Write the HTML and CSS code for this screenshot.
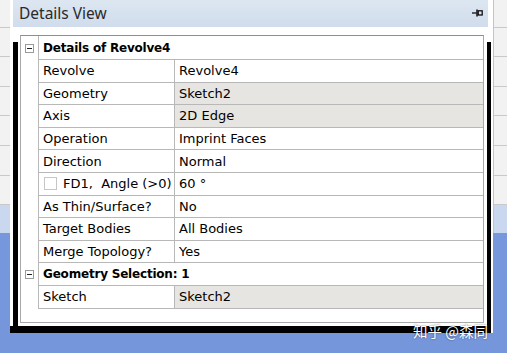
FILE: index.html
```html
<!DOCTYPE html>
<html lang="en">
<head>
    <meta charset="UTF-8" />
    <meta name="viewport" content="width=device-width, initial-scale=1.0" />
    <title>Details View</title>
    <link rel="stylesheet" href="styles.css">
</head>
<body>
    <div class="screen">
        <div class="side side-left"></div>

        <div class="window">
            <div class="title-bar">
                <span class="title">Details View</span>
                <svg class="pin" width="11" height="8" viewBox="0 0 11 8">
                    <path d="M0 4H4.5" stroke="#000" stroke-width="1.2" />
                    <path d="M5 0.5V7.5" stroke="#000" stroke-width="1.4" />
                    <rect x="6.2" y="1.8" width="4" height="4.2" fill="none" stroke="#000" stroke-width="1.2" />
                </svg>
            </div>

            <div class="frame">
                <div class="details-grid">
                    <div class="row group first">
                        <div class="toggle"><span class="minus"></span></div>
                        <div class="cell group-title">Details of Revolve4</div>
                    </div>
                    <div class="row">
                        <div class="toggle"></div>
                        <div class="cell name">Revolve</div>
                        <div class="cell value">Revolve4</div>
                    </div>
                    <div class="row">
                        <div class="toggle"></div>
                        <div class="cell name">Geometry</div>
                        <div class="cell value readonly">Sketch2</div>
                    </div>
                    <div class="row">
                        <div class="toggle"></div>
                        <div class="cell name">Axis</div>
                        <div class="cell value readonly">2D Edge</div>
                    </div>
                    <div class="row">
                        <div class="toggle"></div>
                        <div class="cell name">Operation</div>
                        <div class="cell value">Imprint Faces</div>
                    </div>
                    <div class="row">
                        <div class="toggle"></div>
                        <div class="cell name">Direction</div>
                        <div class="cell value">Normal</div>
                    </div>
                    <div class="row">
                        <div class="toggle"></div>
                        <div class="cell name"><span class="check"></span>FD1,&nbsp; Angle (&gt;0)</div>
                        <div class="cell value">60 °</div>
                    </div>
                    <div class="row">
                        <div class="toggle"></div>
                        <div class="cell name">As Thin/Surface?</div>
                        <div class="cell value">No</div>
                    </div>
                    <div class="row">
                        <div class="toggle"></div>
                        <div class="cell name">Target Bodies</div>
                        <div class="cell value">All Bodies</div>
                    </div>
                    <div class="row">
                        <div class="toggle"></div>
                        <div class="cell name">Merge Topology?</div>
                        <div class="cell value">Yes</div>
                    </div>
                    <div class="row group">
                        <div class="toggle"><span class="minus"></span></div>
                        <div class="cell group-title">Geometry Selection: 1</div>
                    </div>
                    <div class="row">
                        <div class="toggle"></div>
                        <div class="cell name">Sketch</div>
                        <div class="cell value readonly">Sketch2</div>
                    </div>
                </div>
            </div>
        </div>

        <div class="side side-right"></div>

        <div class="watermark">知乎 @森同</div>
    </div>
</body>
</html>
```

FILE: styles.css
```css
/* Page */
body {
    margin: 0;
    font-family: "DejaVu Sans", Verdana, sans-serif;
    font-size: 13px;
    color: #000;
}

.screen {
    position: relative;
    display: flex;
    width: 507px;
    height: 353px;
    overflow: hidden;
    background: linear-gradient(#7b9be0, #7696dc);
}

/* Background strips on both sides */
.side {
    height: 233px;
    background:
        linear-gradient(to bottom, transparent 205px, #c9d8ef 205px),
        repeating-linear-gradient(to bottom, #f2f2f2 0, #f2f2f2 26.6px, #c9c9c9 26.6px, #c9c9c9 27.6px, #f2f2f2 27.6px, #f2f2f2 29.6px);
}

.side-left {
    width: 10px;
}

.side-right {
    flex: 1;
    border-left: 1px solid #c4c4c4;
}

/* Window */
.window {
    width: 483px;
    height: 333px;
    background: #fff;
    display: flex;
    flex-direction: column;
}

.title-bar {
    height: 27px;
    margin: 0 5px 0 3px;
    padding: 0 5px 0 6px;
    display: flex;
    align-items: center;
    justify-content: space-between;
    background: linear-gradient(#dde7f2, #d0dcec);
}

.title {
    font-family: "Noto Sans", sans-serif;
    font-size: 15.5px;
    color: #2a2a2a;
    margin-top: -1px;
}

.pin {
    display: block;
    margin-top: -1px;
}

.frame {
    position: relative;
    flex: 1;
    margin: 15px 2px 0 3px;
    padding: 0 3px 3px 2px;
    border-left: 5px solid #000;
    border-right: 4px solid #000;
    border-bottom: 7px solid #000;
}

/* bottom edge of the frame runs out to the window border */
.frame::after {
    content: "";
    position: absolute;
    left: -8px;
    bottom: -7px;
    width: 3px;
    height: 7px;
    background: #000;
}

/* Property grid */
.details-grid {
    margin-top: -7px;
    height: calc(100% + 7px);
    box-sizing: border-box;
    border: 1px solid #a9a9a9;
    border-top-color: #8f8f8f;
}

.row {
    display: grid;
    grid-template-columns: 17px 136px 1fr;
    height: 22.6px;
}

.row.first {
    height: 24px;
}

.toggle {
    display: flex;
    align-items: center;
    padding-left: 4px;
}

.minus {
    position: relative;
    width: 7px;
    height: 7px;
    border: 1px solid #9a9a9a;
    background: #fff;
}

.minus::after {
    content: "";
    position: absolute;
    left: 1px;
    top: 3px;
    width: 5px;
    height: 1px;
    background: #222;
}

.cell {
    display: flex;
    align-items: center;
    padding-left: 4px;
    border-left: 1px solid #b8b8b8;
    border-bottom: 1px solid #b8b8b8;
    white-space: nowrap;
    overflow: hidden;
}

.group-title {
    grid-column: span 2;
    font-weight: bold;
    font-size: 12px;
    letter-spacing: -0.2px;
}

.value.readonly {
    background: #e6e5e1;
}

.check {
    width: 11px;
    height: 11px;
    border: 1px solid #c6c6c6;
    margin: 0 6px 0 1px;
    flex: none;
}

/* Watermark */
.watermark {
    position: absolute;
    left: 413px;
    top: 320px;
    font-family: "Noto Sans CJK SC", sans-serif;
    font-size: 14.5px;
    color: #fff;
    text-shadow: 0 0 2px rgba(0, 0, 0, 0.6);
}
```
